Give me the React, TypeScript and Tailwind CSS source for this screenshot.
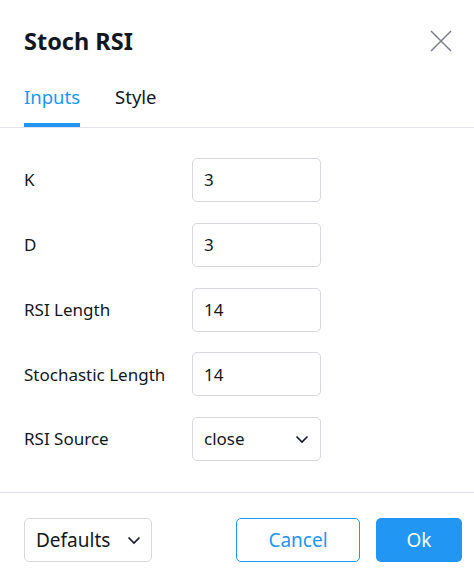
import React from "react";

const Chevron = () => (
  <svg width="14" height="9" viewBox="0 0 14 9" fill="none">
    <path d="M1.5 1.5 L7 7 L12.5 1.5" stroke="#131722" strokeWidth="1.6" />
  </svg>
);

const Field = ({ label, value, select }: { label: string; value: string; select?: boolean }) => (
  <div className="flex items-center h-[44px]">
    <div className="w-[168px] text-[17px] text-[#131722]">{label}</div>
    <div className="w-[129px] h-[44px] border border-[#d6d8de] rounded-[5px] flex items-center justify-between pl-[11px] pr-[11px] text-[17px] text-[#131722]">
      <span>{value}</span>
      {select && <Chevron />}
    </div>
  </div>
);

export default function App() {
  return (
    <div className="w-[474px] h-[579px] bg-white" style={{ fontFamily: '"Noto Sans", "Open Sans", sans-serif' }}>
      <div className="h-[82px] flex items-center justify-between px-6">
        <div className="text-[23.5px] font-bold text-[#131722] pt-[1px]">Stoch RSI</div>
        <svg width="24" height="24" viewBox="0 0 24 24" className="mr-[-3px]">
          <path d="M2 2 L22 22 M22 2 L2 22" stroke="#7c7f88" strokeWidth="1.5" />
        </svg>
      </div>
      <div className="flex px-6 gap-[35px] border-b border-[#e0e3eb] h-[46px]">
        <div className="flex flex-col justify-between">
          <span className="text-[18.5px] text-[#2196f3] leading-[28px] pt-[1px]">Inputs</span>
          <div className="h-[4px] bg-[#2196f3]" />
        </div>
        <div className="flex flex-col">
          <span className="text-[18.5px] text-[#131722] leading-[28px] pt-[1px]">Style</span>
        </div>
      </div>
      <div className="flex flex-col gap-[20.75px] px-6 pt-[30px] pb-[31px] border-b border-[#e0e3eb]">
        <Field label="K" value="3" />
        <Field label="D" value="3" />
        <Field label="RSI Length" value="14" />
        <Field label="Stochastic Length" value="14" />
        <Field label="RSI Source" value="close" select />
      </div>
      <div className="flex items-center justify-between px-6 pt-[25px] pr-[12px]">
        <div className="w-[128px] h-[44px] border border-[#d6d8de] rounded-[5px] flex items-center justify-between pl-[11px] pr-[10px] text-[19px] text-[#131722]">
          <span>Defaults</span>
          <Chevron />
        </div>
        <div className="flex gap-[16px]">
          <div className="w-[124px] h-[44px] border border-[#2196f3] rounded-[5px] flex items-center justify-center text-[19px] text-[#2196f3]">
            Cancel
          </div>
          <div className="w-[86px] h-[44px] bg-[#2196f3] rounded-[5px] flex items-center justify-center text-[19px] text-white">
            Ok
          </div>
        </div>
      </div>
    </div>
  );
}
